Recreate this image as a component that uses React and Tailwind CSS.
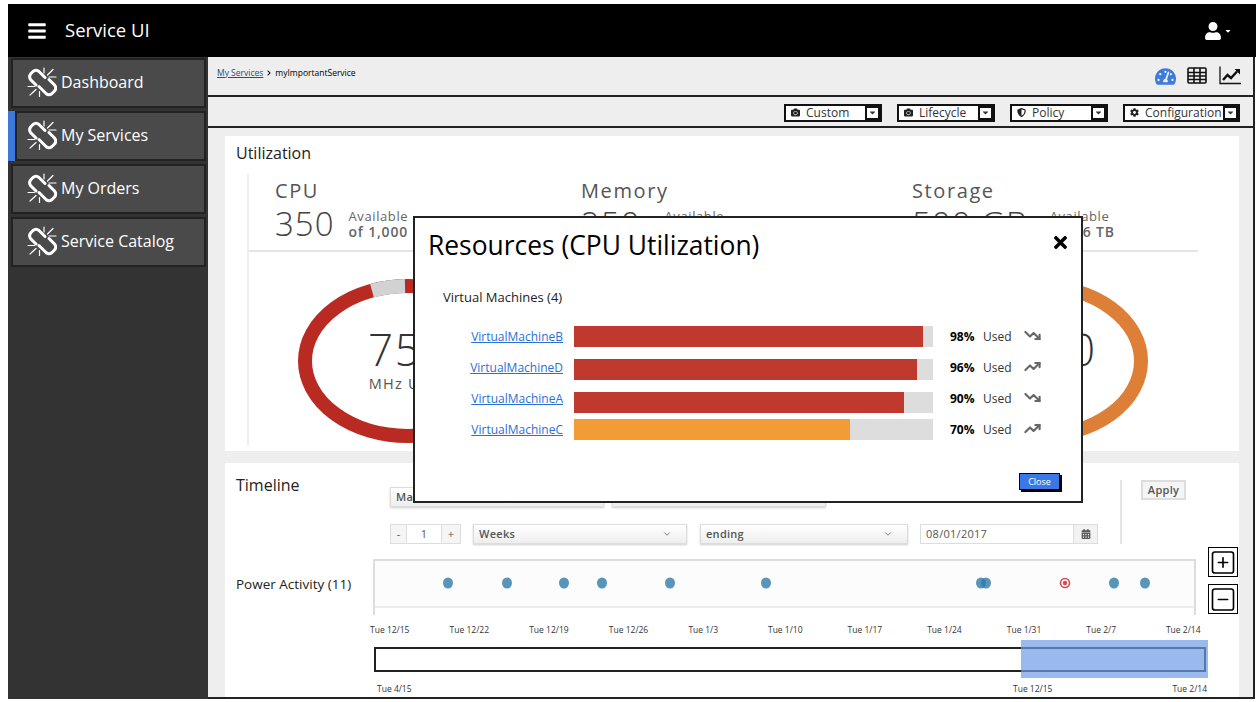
import React from 'react';
import { FaBars, FaUser, FaCaretDown, FaCamera, FaShieldAlt, FaCog, FaTachometerAlt, FaTimes, FaCalendarAlt, FaChevronRight } from 'react-icons/fa';
import { ChevronDown, TrendingUp, TrendingDown, SquarePlus, SquareMinus } from 'lucide-react';

const navItems = ['Dashboard', 'My Services', 'My Orders', 'Service Catalog'];

const actions = [
  { label: 'Custom', Icon: FaCamera, width: 'w-[98px]' },
  { label: 'Lifecycle', Icon: FaCamera, width: 'w-[98px]' },
  { label: 'Policy', Icon: FaShieldAlt, width: 'w-[98px]' },
  { label: 'Configuration', Icon: FaCog, width: 'w-[117px]' },
];

const vms = [
  { name: 'VirtualMachineB', pct: '98%', fill: 'w-[349px] bg-[#c0392f]', bar: 'mt-0', Trend: TrendingDown },
  { name: 'VirtualMachineD', pct: '96%', fill: 'w-[343px] bg-[#c0392f]', bar: 'mt-[12px]', Trend: TrendingUp },
  { name: 'VirtualMachineA', pct: '90%', fill: 'w-[330px] bg-[#c0392f]', bar: 'mt-[12px]', Trend: TrendingDown },
  { name: 'VirtualMachineC', pct: '70%', fill: 'w-[276px] bg-[#f39c35]', bar: 'mt-[6px]', Trend: TrendingUp },
];

const ticks = ['Tue 12/15', 'Tue 12/22', 'Tue 12/19', 'Tue 12/26', 'Tue 1/3', 'Tue 1/10', 'Tue 1/17', 'Tue 1/24', 'Tue 1/31', 'Tue 2/7', 'Tue 2/14'];
const dots = [73, 132, 189, 227, 295, 391, 606, 611, 739, 770];

// broken chain icon used on every nav item
const LinkIcon = () => (
  <svg width="30" height="30" viewBox="0 0 30 30" fill="none" stroke="#fff" strokeLinecap="round" className="shrink-0">
    <path d="M9 18 L3.5 12.5 Q1.5 9.5 4 6.5 L6 4.5 Q9 2 12 4.5 L18 10.5" strokeWidth="3" />
    <path d="M12 19.5 L19 26.5 Q22 29 25 26.5 L27.5 24 Q30 21 27.5 18 L22 12.5" strokeWidth="3" />
    <path d="M17 1 V6 M20.5 8 L26 2.5 M22 10 H29 M1 19.5 H7.5 M3 28 L9 22.5 M12.5 24.5 V30" strokeWidth="1.2" />
  </svg>
);

const Select = ({ label, width }) => (
  <div className={`${width} h-[20px] flex items-center justify-between pl-[5px] pr-[14px] border border-[#ddd] bg-gradient-to-b from-white to-[#eee] shadow-[0_1px_2px_rgba(0,0,0,0.2)] text-[11px] font-semibold tracking-wide text-[#555]`}>
    <span>{label}</span>
    <ChevronDown size={10} className="text-[#666]" />
  </div>
);

const Stat = ({ title, value, label1, label2, width, gap }) => (
  <div className={width}>
    <div className="text-[20px] leading-[24px] text-[#555] tracking-[1.6px]">{title}</div>
    <div className={`flex items-center mt-[4px] ${gap}`}>
      <span className="text-[33px] leading-[34px] font-light text-[#444] tracking-[1px]">{value}</span>
      <div className="text-[#666] leading-[15px]">
        <div className="text-[13px] tracking-[0.6px]">{label1}</div>
        <div className="text-[14px] font-semibold tracking-[0.8px]">{label2}</div>
      </div>
    </div>
  </div>
);

const Gauge = ({ color, value, unit, gap }) => (
  <div className="relative w-[220px] h-[164px]">
    <svg width="220" height="164" viewBox="0 0 220 164" fill="none" strokeWidth="14">
      <ellipse cx="110" cy="82" rx="103" ry="75" stroke={color} />
      {gap && <path d="M74 11.7 A103 75 0 0 1 107 7" stroke="#d2d2d2" />}
    </svg>
    {value && (
      <div className="absolute inset-0 flex flex-col items-center pt-[46px]">
        <span className="text-[44px] leading-[48px] font-light text-[#333] tracking-[1.5px]">{value}</span>
        <span className="text-[14.5px] leading-[16px] mt-[3px] text-[#555] tracking-[1.2px]">{unit}</span>
      </div>
    )}
  </div>
);

const App = () => {
  return (
    <div className="relative w-[1256px] h-[702px] overflow-hidden bg-white pt-[4px] pl-[8px] pb-[3px] flex flex-col font-['Open_Sans',sans-serif] text-black">
      {/* Top bar */}
      <header className="h-[53px] shrink-0 bg-black flex items-center justify-between pl-[19px] pr-[24px] text-white">
        <div className="flex items-center gap-[18px]">
          <FaBars size={20} />
          <span className="text-[18.5px] font-medium -mt-[1px]">Service UI</span>
        </div>
        <div className="flex items-center gap-[2px]">
          <FaUser size={18} />
          <FaCaretDown size={8} />
        </div>
      </header>

      <div className="flex flex-1 min-h-0">
        {/* Sidebar */}
        <aside className="w-[200px] shrink-0 bg-[#333] pt-[1px] flex flex-col gap-[3px]">
          {navItems.map((item, i) => (
            <div key={item} className={`flex h-[50px] ${i === 1 ? '' : 'pl-[3px]'}`}>
              {i === 1 && <div className="w-[7px] bg-[#3d78dc]" />}
              <div className={`flex-1 mr-[2px] flex items-center gap-[4px] pb-[3px] bg-[#4a4a4a] border-2 border-[#222] text-white text-[16px] ${i === 1 ? 'pl-[10px]' : 'pl-[14px]'}`}>
                <LinkIcon />
                <span>{item}</span>
              </div>
            </div>
          ))}
        </aside>

        {/* Main */}
        <main className="flex-1 min-w-0 mr-[1px] flex flex-col bg-[#eee] border-r-2 border-b-2 border-[#222]">
          <div className="h-[40px] shrink-0 border-b-2 border-[#222] flex items-center justify-between pl-[9px] pr-[12px]">
            <div className="flex items-center gap-[3px] text-[8.5px] -mt-[6px]">
              <a className="underline text-[#2b4a80]">My Services</a>
              <FaChevronRight size={6} />
              <span>myImportantService</span>
            </div>
            <div className="flex items-center gap-[12px]">
              <FaTachometerAlt size={21} className="text-[#3d7bdc]" />
              <svg width="20" height="17" viewBox="0 0 20 17" fill="none" stroke="#111" strokeWidth="1.6" className="-mt-[1px] -ml-[1px]">
                <rect x="1" y="1" width="18" height="15" rx="1" />
                <path d="M1 5.5H19M1 9H19M1 12.5H19M7 1V16M13 1V16" />
              </svg>
              <svg width="22" height="19" viewBox="0 0 22 19" fill="none" stroke="#111" className="-mt-[1px]">
                <path d="M1 0.5V17.5H22" strokeWidth="1.3" />
                <path d="M4 14 L8.5 9 L12 12 L18 5.5" strokeWidth="2.4" />
                <path d="M15.5 3 H21 V8.5 Z" fill="#111" stroke="none" />
              </svg>
            </div>
          </div>

          <div className="h-[31px] shrink-0 border-b-2 border-[#222] flex items-center justify-end gap-[15px] pr-[13px] pt-[2px]">
            {actions.map(({ label, Icon, width }) => (
              <div key={label} className={`${width} h-[18px] bg-white border-2 border-[#111] flex items-center pl-[5px] text-[12px] text-[#333]`}>
                <Icon size={9} className="text-[#222] shrink-0" />
                <span className="ml-[6px] flex-1">{label}</span>
                <span className="w-[15px] h-[14px] border-2 border-[#111] flex items-center justify-center">
                  <FaCaretDown size={9} />
                </span>
              </div>
            ))}
          </div>

          <div className="flex-1 min-h-0 pl-[17px] pr-[14px] pt-[8px] flex flex-col gap-[12px]">
            {/* Utilization */}
            <section className="h-[315px] shrink-0 bg-white pl-[11px] pt-[6px]">
              <h2 className="text-[16px] leading-[22px] text-[#222]">Utilization</h2>
              <div className="ml-[11px] mt-[10px] w-[951px] h-[271px] border-l-2 border-[#eee]">
                <div className="h-[78px] border-b-2 border-[#e5e5e5] flex pl-[26px] pt-[5px]">
                  <Stat title="CPU" value="350" label1="Available" label2="of 1,000" width="w-[306px]" gap="gap-[14px]" />
                  <Stat title="Memory" value="250" label1="Available" label2="of 750 GB" width="w-[331px]" gap="gap-[24px]" />
                  <Stat title="Storage" value="500 GB" label1="Available" label2="of 1.6 TB" width="w-[220px]" gap="gap-[22px]" />
                </div>
                <div className="flex gap-[95px] pl-[49px] pt-[27px]">
                  <Gauge color="#b92b22" gap value="750" unit="MHz Used" />
                  <Gauge color="#c0392f" />
                  <Gauge color="#dd7f36" value="1,000" unit="GB Used" />
                </div>
              </div>
            </section>

            {/* Timeline */}
            <section className="flex-1 min-h-0 bg-white">
              <div className="flex h-[84px]">
                <h2 className="w-[165px] pl-[11px] pt-[11px] text-[16px] leading-[22px] text-[#222]">Timeline</h2>
                <div className="w-[729px] pt-[24px]">
                  <div className="flex gap-[8px]">
                    <Select label="Make" width="w-[214px]" />
                    <Select label="Model" width="w-[214px]" />
                  </div>
                  <div className="flex items-center mt-[17px] text-[11px] text-[#555]">
                    <div className="flex h-[20px] border border-[#ddd] bg-[#f5f5f5] text-center leading-[18px]">
                      <span className="w-[16px] border-r border-[#ddd]">-</span>
                      <span className="w-[35px] bg-white border-r border-[#ddd]">1</span>
                      <span className="w-[18px]">+</span>
                    </div>
                    <div className="ml-[12px]"><Select label="Weeks" width="w-[214px]" /></div>
                    <div className="ml-[13px]"><Select label="ending" width="w-[208px]" /></div>
                    <div className="ml-[12px] w-[178px] h-[20px] flex border border-[#ddd] tracking-wide leading-[18px]">
                      <span className="flex-1 pl-[5px]">08/01/2017</span>
                      <span className="w-[24px] bg-[#f2f2f2] border-l border-[#ddd] flex items-center justify-center">
                        <FaCalendarAlt size={10} />
                      </span>
                    </div>
                  </div>
                </div>
                <div className="ml-[1px] mt-[17px] h-[64px] border-l-2 border-[#e5e5e5] pl-[19px]">
                  <div className="w-[45px] h-[20px] border-2 border-[#ddd] bg-[#f5f5f5] text-[11px] leading-[16px] font-semibold tracking-wide text-center text-[#555]">Apply</div>
                </div>
              </div>

              <div className="flex">
                <div className="w-[148px] pl-[11px] pt-[26px] text-[13.5px] leading-[22px] text-[#222] whitespace-nowrap">Power Activity (11)</div>
                <div className="mt-[12px] w-[823px] h-[56px] border-t-2 border-x-2 border-[#ddd] bg-gradient-to-b from-[#fcfcfc] from-[46px] to-white to-[46px]">
                  <svg width="819" height="54" className="block">
                    <line x1="0" y1="46" x2="819" y2="46" stroke="#ddd" />
                    {dots.map((x) => (
                      <ellipse key={x} cx={x} cy="22" rx="5" ry="5.5" fill="#2f7aa8" fillOpacity="0.8" />
                    ))}
                    <circle cx="690" cy="22" r="4.5" fill="none" stroke="#d44b57" strokeWidth="1.6" />
                    <circle cx="690" cy="22" r="2.2" fill="#d44b57" />
                  </svg>
                </div>
                <div className="ml-[12px] flex flex-col gap-[7px]">
                  <div className="w-[30px] h-[30px] border border-black flex items-center justify-center"><SquarePlus size={29} strokeWidth={1.4} /></div>
                  <div className="w-[30px] h-[30px] border border-black flex items-center justify-center"><SquareMinus size={29} strokeWidth={1.4} /></div>
                </div>
              </div>

              <div className="ml-[145px] w-[838px] mt-[8px] grid grid-cols-[repeat(10,79.6px)_1fr] text-[8.5px] leading-[14px] text-[#333]">
                {ticks.map((t) => <span key={t}>{t}</span>)}
              </div>

              <div className="relative ml-[149px] w-[832px] mt-[10px] h-[25px] bg-white border-2 border-[#222]">
                <div className="absolute left-[645px] -right-[4px] -top-[9px] -bottom-[8px] bg-[#6f9be6]/70" />
              </div>

              <div className="ml-[152px] w-[830px] mt-[11px] flex text-[8.5px] leading-[12px] text-[#333]">
                <span>Tue 4/15</span>
                <span className="ml-auto">Tue 12/15</span>
                <span className="ml-[120px]">Tue 2/14</span>
              </div>
            </section>
          </div>
        </main>
      </div>

      {/* Modal */}
      <div className="absolute left-[413px] top-[216px] w-[670px] h-[287px] bg-white border-2 border-[#222] pl-[13px] pr-[20px] pt-[8px]">
        <div className="flex items-start justify-between">
          <h1 className="text-[26.4px] leading-[38px] text-black">Resources (CPU Utilization)</h1>
          <FaTimes size={19} className="mt-[7px] -mr-[9px]" />
        </div>
        <div className="ml-[15px] mt-[24px] text-[13px] leading-[18px] text-[#222]">Virtual Machines (4)</div>

        <div className="flex mt-[20px]">
          <div className="w-[135px] flex flex-col items-end">
            {vms.map((vm) => (
              <a key={vm.name} className="h-[31px] text-[12px] leading-[21px] underline text-[#2a6fd6]">{vm.name}</a>
            ))}
          </div>
          <div className="ml-[11px] w-[359px]">
            {vms.map((vm) => (
              <div key={vm.name} className={`${vm.bar} h-[21px] bg-[#ddd]`}>
                <div className={`h-full ${vm.fill}`} />
              </div>
            ))}
          </div>
          <div className="ml-[17px] w-[92px]">
            {vms.map(({ name, pct, Trend }) => (
              <div key={name} className="h-[31px] flex items-start text-[12px] leading-[21px] text-[#333]">
                <span className="w-[33px] font-bold text-black">{pct}</span>
                <span className="w-[41px]">Used</span>
                <Trend size={17} strokeWidth={3} className="text-[#666] mt-[1px]" />
              </div>
            ))}
          </div>
        </div>

        <div className="absolute right-[21px] bottom-[11px] w-[41px] h-[17px] bg-[#3b78e7] border border-black shadow-[2px_2px_0_#000] text-white text-[9px] leading-[15px] text-center">Close</div>
      </div>
    </div>
  );
};

export default App;
